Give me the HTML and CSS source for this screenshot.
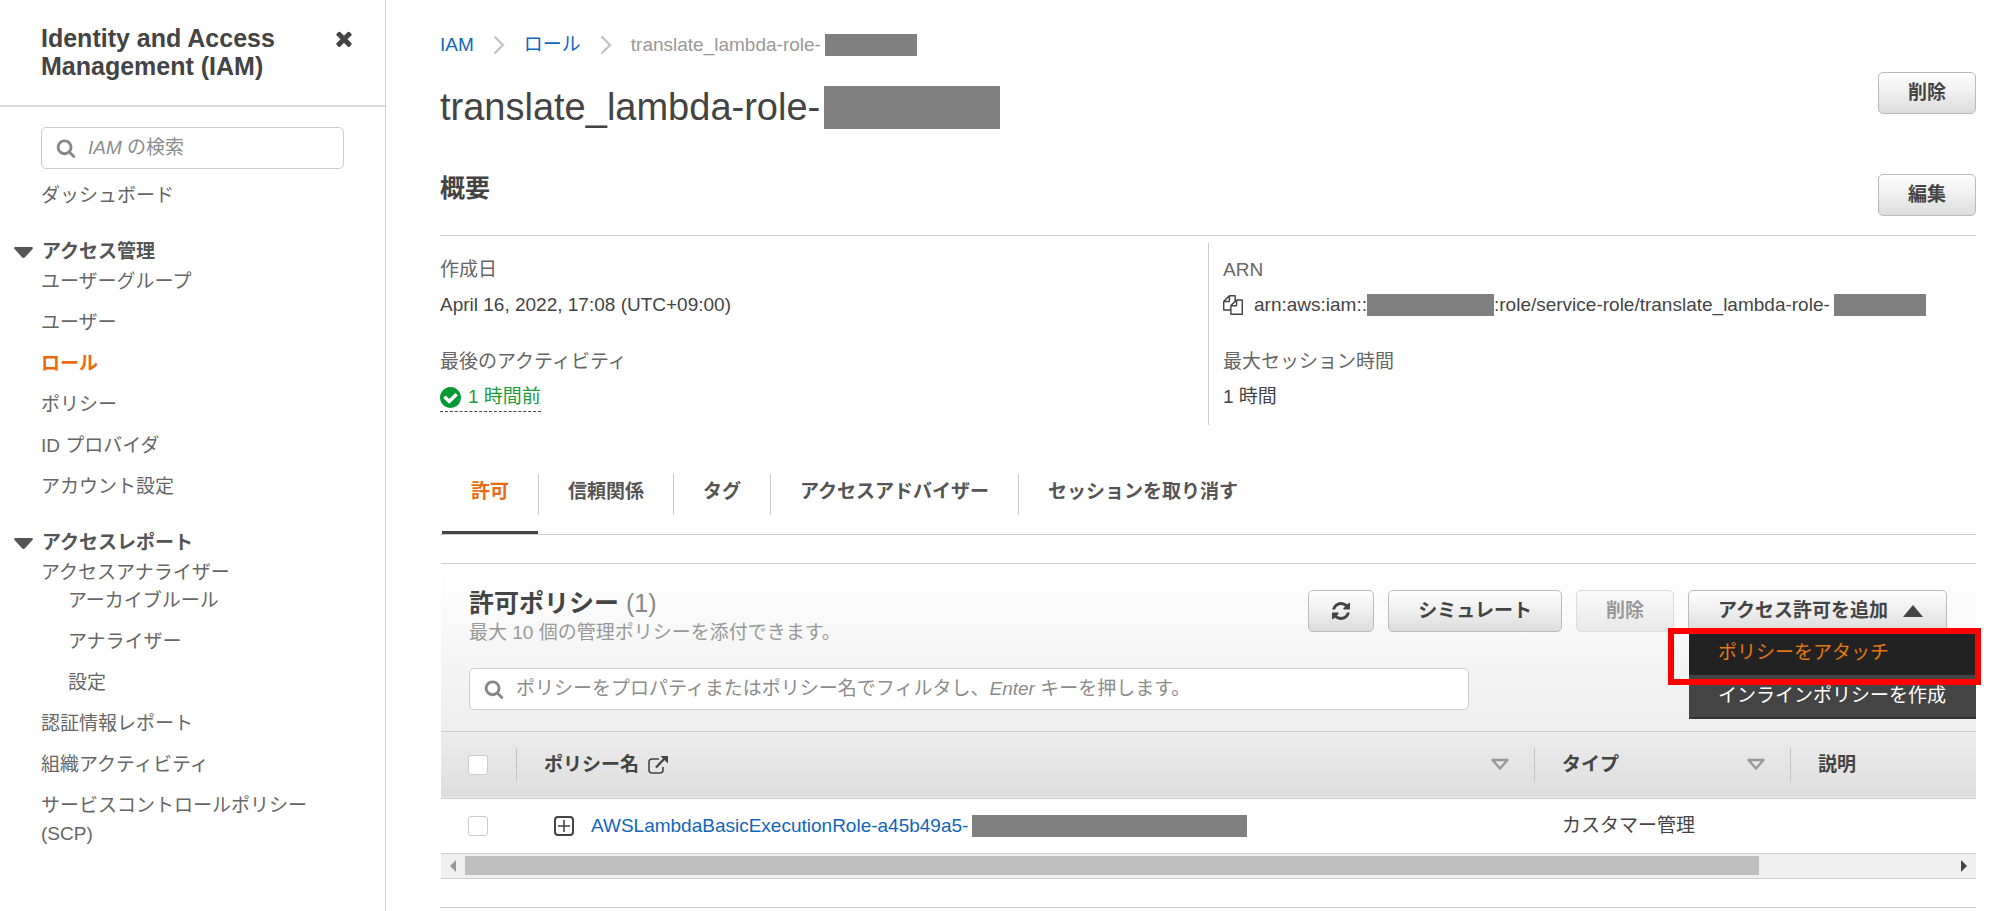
FILE: index.html
```html
<!DOCTYPE html>
<html lang="ja">
<head>
<meta charset="utf-8">
<meta name="viewport" content="width=device-width, initial-scale=1">
<title>IAM - ロール</title>
<link rel="stylesheet" href="styles.css">
</head>
<body>
<svg class="sprite" aria-hidden="true">
  <symbol id="i-search" viewBox="0 0 1792 1792"><path d="M1216 832q0-185-131.500-316.500t-316.500-131.500-316.500 131.500-131.500 316.500 131.500 316.500 316.500 131.500 316.500-131.500 131.500-316.500zm512 832q0 52-38 90t-90 38q-54 0-90-38l-343-342q-179 124-399 124-143 0-273.500-55.500t-225-150-150-225-55.500-273.500 55.500-273.500 150-225 225-150 273.500-55.500 273.500 55.500 225 150 150 225 55.500 273.500q0 220-124 399l343 343q37 37 37 90z"/></symbol>
  <symbol id="i-down" viewBox="0 0 19 11"><path d="M1 0h17q1.500.500.500 2L11 10.300q-1.500 1.200-3 0L.500 2Q-.500.500 1 0z"/></symbol>
  <symbol id="i-sort" viewBox="0 0 20 13"><path d="M2.500 2h15L10 10.500z" fill="none" stroke="currentColor" stroke-width="2.400" stroke-linejoin="round"/></symbol>
  <symbol id="i-chevron" viewBox="0 0 12 20"><path d="M1.500 1.500L10 10l-8.500 8.500" fill="none" stroke="currentColor" stroke-width="2.400"/></symbol>
</svg>
<div class="app">
  <aside class="sidebar">
    <header class="sidebar-head">
      <h2 class="sidebar-title">Identity and Access Management (IAM)</h2>
      <button class="close" type="button" aria-label="閉じる"><svg viewBox="302 238 1188 1316"><path d="M1490 1322q0 40-28 68l-136 136q-28 28-68 28t-68-28l-294-294-294 294q-28 28-68 28t-68-28l-136-136q-28-28-28-68t28-68l294-294-294-294q-28-28-28-68t28-68l136-136q28-28 68-28t68 28l294 294 294-294q28-28 68-28t68 28l136 136q28 28 28 68t-28 68l-294 294 294 294q28 28 28 68z"/></svg></button>
    </header>
    <label class="search sidebar-search">
      <svg class="icon-search"><use href="#i-search"/></svg>
      <input type="search" placeholder="IAM の検索" aria-label="IAM の検索">
    </label>
    <nav class="nav">
      <ul class="nav-list">
        <li><a href="#">ダッシュボード</a></li>
      </ul>
      <button class="nav-group" type="button"><svg class="icon-down"><use href="#i-down"/></svg>アクセス管理</button>
      <ul class="nav-list">
        <li><a href="#">ユーザーグループ</a></li>
        <li><a href="#">ユーザー</a></li>
        <li><a class="current" href="#" aria-current="page">ロール</a></li>
        <li><a href="#">ポリシー</a></li>
        <li><a href="#">ID プロバイダ</a></li>
        <li><a href="#">アカウント設定</a></li>
      </ul>
      <button class="nav-group" type="button"><svg class="icon-down"><use href="#i-down"/></svg>アクセスレポート</button>
      <ul class="nav-list">
        <li><a href="#">アクセスアナライザー</a>
          <ul class="nav-list nav-sub">
            <li><a href="#">アーカイブルール</a></li>
            <li><a href="#">アナライザー</a></li>
            <li><a href="#">設定</a></li>
          </ul>
        </li>
        <li><a href="#">認証情報レポート</a></li>
        <li><a href="#">組織アクティビティ</a></li>
        <li><a href="#">サービスコントロールポリシー (SCP)</a></li>
      </ul>
    </nav>
  </aside>
  <main class="main">
    <header class="page-head">
      <div class="page-heading">
        <nav class="crumbs" aria-label="パンくず">
          <a href="#">IAM</a>
          <svg class="chevron"><use href="#i-chevron"/></svg>
          <a href="#">ロール</a>
          <svg class="chevron"><use href="#i-chevron"/></svg>
          <span class="crumb-here">translate_lambda-role-<span class="mask mask-id"></span></span>
        </nav>
        <h1 class="page-title">translate_lambda-role-<span class="mask mask-title"></span></h1>
      </div>
      <button class="btn" type="button">削除</button>
    </header>

    <section>
      <header class="section-head">
        <h2 class="section-title">概要</h2>
        <button class="btn" type="button">編集</button>
      </header>
      <div class="summary">
        <dl class="facts">
          <dt>作成日</dt>
          <dd>April 16, 2022, 17:08 (UTC+09:00)</dd>
          <dt>最後のアクティビティ</dt>
          <dd><span class="activity"><svg class="icon-check" viewBox="128 128 1536 1536"><path d="M1412 734q0-28-18-46l-91-90q-19-19-45-19t-45 19l-408 407-226-226q-19-19-45-19t-45 19l-91 90q-18 18-18 46 0 27 18 45l362 362q19 19 45 19 27 0 46-19l543-543q18-18 18-45zm252 162q0 209-103 385.500t-279.500 279.500-385.500 103-385.500-103-279.500-279.500-103-385.500 103-385.500 279.500-279.500 385.500-103 385.500 103 279.500 279.500 103 385.500z"/></svg>1 時間前</span></dd>
        </dl>
        <dl class="facts">
          <dt>ARN</dt>
          <dd class="arn"><button class="copy" type="button" aria-label="コピー"><svg viewBox="0 0 1792 1792"><path d="M1696 384q40 0 68 28t28 68v1216q0 40-28 68t-68 28h-960q-40 0-68-28t-28-68v-288h-544q-40 0-68-28t-28-68v-672q0-40 20-88t48-76l408-408q28-28 76-48t88-20h416q40 0 68 28t28 68v328q68-40 128-40h416zm-544 213l-299 299h299v-299zm-640-384l-299 299h299v-299zm196 647l316-316v-416h-384v416q0 40-28 68t-68 28h-416v640h512v-256q0-40 20-88t48-76zm956 804v-1152h-384v416q0 40-28 68t-68 28h-416v640h896z"/></svg></button><span>arn:aws:iam::</span><span class="mask mask-account"></span><span>:role/service-role/translate_lambda-role-</span><span class="mask mask-id"></span></dd>
          <dt>最大セッション時間</dt>
          <dd>1 時間</dd>
        </dl>
      </div>
    </section>

    <div class="tabs" role="tablist">
      <button class="tab active" type="button" role="tab" aria-selected="true"><span>許可</span></button>
      <button class="tab" type="button" role="tab"><span>信頼関係</span></button>
      <button class="tab" type="button" role="tab"><span>タグ</span></button>
      <button class="tab" type="button" role="tab"><span>アクセスアドバイザー</span></button>
      <button class="tab" type="button" role="tab"><span>セッションを取り消す</span></button>
    </div>

    <section class="panel">
      <div class="panel-top">
        <header class="panel-head">
          <div>
            <h2 class="panel-title">許可ポリシー <span class="count">(1)</span></h2>
            <p class="panel-note">最大 10 個の管理ポリシーを添付できます。</p>
          </div>
          <div class="actions">
            <button class="btn btn-icon" type="button" aria-label="更新"><svg viewBox="128 128 1536 1536"><path d="M1639 1056q0 5-1 7-64 268-268 434.500t-478 166.500q-146 0-282.500-55t-243.500-157l-129 129q-19 19-45 19t-45-19-19-45v-448q0-26 19-45t45-19h448q26 0 45 19t19 45-19 45l-137 137q71 66 161 102t187 36q134 0 250-65t186-179q11-17 53-117 8-23 30-23h192q13 0 22.500 9.500t9.500 22.500zm25-800v448q0 26-19 45t-45 19h-448q-26 0-45-19t-19-45 19-45l138-138q-148-137-349-137-134 0-250 65t-186 179q-11 17-53 117-8 23-30 23h-199q-13 0-22.500-9.500t-9.500-22.500v-7q65-268 270-434.500t480-166.500q146 0 284 55.500t245 156.500l130-129q19-19 45-19t45 19 19 45z"/></svg></button>
            <button class="btn" type="button">シミュレート</button>
            <button class="btn" type="button" disabled>削除</button>
            <div class="dropdown">
              <button class="btn btn-menu" type="button" aria-expanded="true">アクセス許可を追加<svg class="icon-up" viewBox="0 0 20 12"><path d="M10 0l10 12H0z"/></svg></button>
              <ul class="menu">
                <li><a class="hot" href="#">ポリシーをアタッチ</a></li>
                <li><a href="#">インラインポリシーを作成</a></li>
              </ul>
              <div class="callout"></div>
            </div>
          </div>
        </header>
        <label class="search filter">
          <svg class="icon-search"><use href="#i-search"/></svg>
          <input type="search" placeholder="ポリシーをプロパティまたはポリシー名でフィルタし、Enter キーを押します。" aria-label="ポリシーのフィルタ">
        </label>
      </div>
      <table class="policies">
        <colgroup><col class="col-check"><col><col class="col-type"><col class="col-desc"></colgroup>
        <thead>
          <tr>
            <th class="pick"><input type="checkbox" aria-label="すべて選択"></th>
            <th><div class="th">ポリシー名<svg class="icon-ext" viewBox="0 0 20 18"><path d="M11 3H4Q1 3 1 6v8q0 3 3 3h8q3 0 3-3v-3" fill="none" stroke="currentColor" stroke-width="1.600"/><path d="M8 11.500L17 2" fill="none" stroke="currentColor" stroke-width="2.200"/><path d="M12.500 0H20v7.500z"/></svg><svg class="icon-sort"><use href="#i-sort"/></svg></div></th>
            <th><div class="th">タイプ<svg class="icon-sort"><use href="#i-sort"/></svg></div></th>
            <th><div class="th">説明</div></th>
          </tr>
        </thead>
        <tbody>
          <tr>
            <td class="pick"><input type="checkbox" aria-label="ポリシーを選択"></td>
            <td><div class="policy"><button class="expand" type="button" aria-label="展開"><svg viewBox="0 0 20 20"><rect x="1" y="1" width="18" height="18" rx="3" fill="none" stroke="currentColor" stroke-width="2"/><path d="M4 10h12M10 4v12" stroke="currentColor" stroke-width="1.600"/></svg></button><a href="#">AWSLambdaBasicExecutionRole-a45b49a5-</a><span class="mask mask-policy"></span></div></td>
            <td class="type">カスタマー管理</td>
            <td></td>
          </tr>
        </tbody>
      </table>
      <div class="scrollbar">
        <svg class="arrow arrow-left" viewBox="0 0 6 12"><path d="M6 0v12L0 6z"/></svg>
        <div class="track"><div class="thumb"></div></div>
        <svg class="arrow" viewBox="0 0 6 12"><path d="M0 0v12l6-6z"/></svg>
      </div>
    </section>
    <hr class="end">
  </main>
</div>
</body>
</html>
```

FILE: styles.css
```css
* { box-sizing: border-box; }
body {
  margin: 0;
  background: #fff;
  color: #444;
  font: 19px/28px "Liberation Sans", "Noto Sans CJK JP", sans-serif;
}
h1, h2, p, ul, dl, dd { margin: 0; padding: 0; }
ul { list-style: none; }
a { color: #1166bb; text-decoration: none; }
svg { display: block; fill: currentColor; flex: none; }
button, input { font: inherit; color: inherit; }
button { padding: 0; border: 0; background: none; cursor: pointer; }
.sprite { position: absolute; width: 0; height: 0; }

.app { display: flex; min-height: 100vh; }

/* Sidebar */
.sidebar { flex: none; width: 386px; border-right: 1px solid #ccd0d0; }
.sidebar-head {
  display: flex;
  justify-content: space-between;
  align-items: flex-start;
  height: 107px;
  padding: 24px 33px 0 41px;
  border-bottom: 2px solid #d9dcdc;
}
.sidebar-title { width: 250px; font-size: 25px; line-height: 28px; }
.close { padding-top: 6px; }
.close svg { width: 16px; height: 17px; }

.search {
  display: flex;
  align-items: center;
  height: 42px;
  padding: 0 14px;
  gap: 12px;
  border: 1px solid #ccc;
  border-radius: 5px;
  background: #fff;
}
.search input {
  flex: 1;
  min-width: 0;
  padding: 0;
  border: 0;
  outline: 0;
  background: none;
}
.search input::placeholder {
  color: #8c8c8c;
  opacity: 1;
  font-style: italic;
  font-synthesis: none;
}
.icon-search { width: 20px; height: 20px; color: #888; }
.sidebar-search { margin: 20px 41px 0; }

.nav { padding: 13px 40px 0 14px; }
.nav-list { display: grid; gap: 13px; padding-left: 27px; }
.nav-list a { display: block; color: #666; }
.nav-list .current { color: #ec6a0c; font-weight: bold; }
.nav-group {
  display: flex;
  align-items: center;
  gap: 9px;
  margin: 28px 0 2px;
  color: #555;
  font-weight: bold;
}
.icon-down { width: 19px; height: 11px; }

/* Page heading */
.main { flex: 1; min-width: 0; padding: 0 24px 0 54px; }
.page-head { display: flex; justify-content: space-between; align-items: flex-start; }
.page-head .btn { margin-top: 72px; }
.page-heading { padding-top: 31px; }
.crumbs { display: flex; align-items: center; gap: 19px; }
.crumb-here { display: flex; align-items: center; color: #999; }
.chevron { width: 12px; height: 20px; color: #c4c4c4; }
.page-title {
  display: flex;
  align-items: center;
  margin-top: 24px;
  font-size: 38px;
  line-height: 48px;
  font-weight: normal;
}
.mask { flex: none; display: block; height: 22px; background: #808080; }
.mask-id { width: 92px; margin-left: 4px; }
.mask-title { width: 176px; height: 43px; margin-left: 4px; }
.mask-account { width: 127px; }
.mask-policy { width: 275px; margin-left: 4px; }

.btn {
  height: 42px;
  padding: 0 29px;
  border: 1px solid #bbb;
  border-radius: 5px;
  background: linear-gradient(#fff, #ddd);
  color: #444;
  font-weight: bold;
  white-space: nowrap;
}
.btn:disabled { border-color: #ddd; background: linear-gradient(#fafafa, #e8e8e8); color: #999; }

.section-head {
  display: flex;
  justify-content: space-between;
  align-items: flex-start;
  margin-top: 43px;
  padding-bottom: 19px;
  border-bottom: 1px solid #ccc;
}
.section-title { font-size: 25px; line-height: 28px; }

/* Summary */
.summary { display: grid; grid-template-columns: 1fr 1fr; padding-top: 7px; }
.facts { padding: 13px 0 9px; }
.facts + .facts { padding-left: 14px; border-left: 1px solid #ccc; }
.facts dt { margin-bottom: 7px; color: #666; }
.facts dd + dt { margin-top: 29px; }
.arn { display: flex; align-items: center; }
.copy { margin-right: 11px; }
.copy svg { width: 20px; height: 20px; }
.activity {
  display: inline-flex;
  align-items: center;
  gap: 7px;
  border-bottom: 1px dashed #444;
  color: #1b9c3c;
}
.icon-check { width: 21px; height: 21px; color: #093; }

/* Tabs */
.tabs { display: flex; margin-top: 49px; padding-left: 2px; border-bottom: 1px solid #ccc; }
.tab { padding-bottom: 16px; border-bottom: 3px solid transparent; color: #555; font-weight: bold; }
.tab span { display: block; height: 41px; padding: 0 29px; line-height: 36px; }
.tab + .tab span { border-left: 1px solid #ccc; }
.tab.active { border-color: #444; color: #ec6a0c; }

/* Permission policies */
.panel { margin: 28px 0 0 1px; border-top: 1px solid #ccc; }
.panel-top { padding: 23px 29px 21px 28px; background: linear-gradient(#fff, #eee); }
.panel-head { display: flex; justify-content: space-between; }
.panel-title { font-size: 25px; line-height: 32px; }
.count { color: #888; font-weight: normal; }
.panel-note { color: #999; }
.actions { display: flex; gap: 14px; align-items: flex-start; padding-top: 3px; }
.btn-icon { padding: 0 23px; }
.btn-icon svg { width: 18px; height: 18px; }
.btn-menu { display: flex; align-items: center; gap: 15px; padding: 0 23px 0 29px; }
.icon-up { width: 20px; height: 12px; }
.dropdown { position: relative; }
.menu {
  position: absolute;
  z-index: 1;
  top: 42px;
  left: 1px;
  right: -29px;
  border-bottom: 2px solid #333;
  background: #444;
}
.menu a { display: block; padding: 7px 0 7px 29px; color: #fff; white-space: nowrap; }
.menu .hot { padding-bottom: 8px; background: #222; color: #e47911; }
.callout {
  position: absolute;
  z-index: 2;
  top: 38px;
  left: -20px;
  right: -34px;
  height: 57px;
  border: 6px solid #f00;
  pointer-events: none;
}
.filter { max-width: 1000px; margin-top: 21px; }

.policies { width: 100%; border-collapse: collapse; table-layout: fixed; text-align: left; }
.policies th, .policies td { padding: 0; }
.policies thead tr {
  height: 67px;
  border-top: 1px solid #ccc;
  border-bottom: 1px solid #ccc;
  background: linear-gradient(#ececec, #dedede);
}
.policies tbody tr { height: 55px; border-bottom: 1px solid #ccc; }
.col-check { width: 75px; }
.col-type { width: 256px; }
.col-desc { width: 186px; }
.policies .pick { padding-left: 27px; }
.pick input {
  appearance: none;
  display: block;
  width: 20px;
  height: 20px;
  margin: 0;
  border: 1px solid #ccc;
  border-radius: 3px;
  background: #fff;
}
.th {
  display: flex;
  align-items: center;
  height: 33px;
  padding: 0 24px 0 27px;
  border-left: 1px solid #c4c4c4;
}
.icon-ext { width: 20px; height: 18px; margin-left: 9px; }
.icon-sort { width: 20px; height: 13px; margin-left: auto; color: #999; }
.policy { display: flex; align-items: center; padding-left: 38px; }
.expand { margin-right: 17px; }
.expand svg { width: 20px; height: 20px; }
.policies .type { padding-left: 28px; }

.scrollbar {
  display: flex;
  align-items: center;
  gap: 9px;
  height: 25px;
  padding: 0 9px;
  border-bottom: 1px solid #ccc;
  background: #f0f0f0;
}
.arrow { width: 6px; height: 12px; }
.arrow-left { color: #999; }
.track { flex: 1; }
.thumb { width: 87%; height: 19px; background: #bfbfbf; }
.end { margin: 28px 0 0; border: 0; border-top: 1px solid #ccc; }
```
